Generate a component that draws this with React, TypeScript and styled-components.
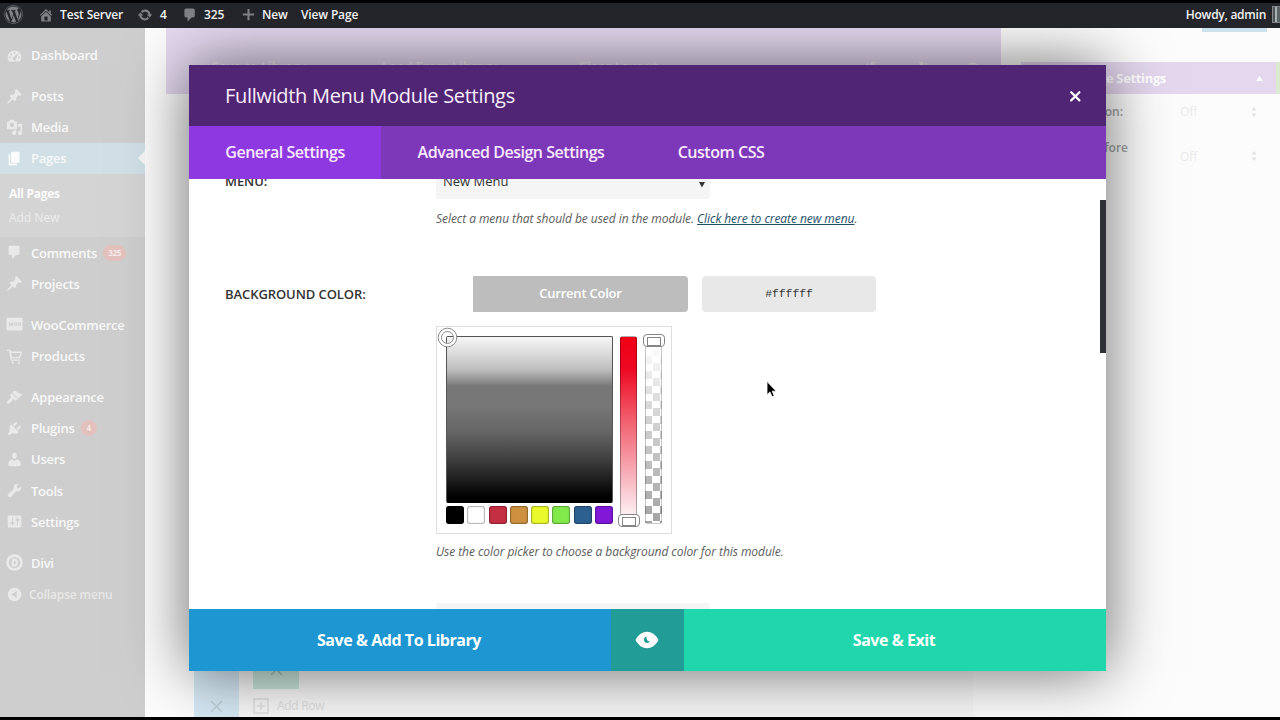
import React from 'react';
import styled, { createGlobalStyle, css } from 'styled-components';
import { FaWordpress } from 'react-icons/fa';

const Global = createGlobalStyle`
  * { box-sizing: border-box; }
  body { margin: 0; background: #000; overflow: hidden; font-family: 'Open Sans', 'Liberation Sans', sans-serif; }
`;

/* ---------- frame ---------- */
const Screen = styled.div`
  position: relative;
  width: 1280px;
  height: 720px;
  padding: 3px 0;
  background: #000;
  overflow: hidden;
  display: flex;
  flex-direction: column;
`;

const AdminBar = styled.header`
  flex: none;
  height: 25px;
  background: #23252b;
  display: flex;
  align-items: flex-start;
  color: #f2f2f2;
  font-size: 12px;
  font-weight: 600;
  letter-spacing: -0.15px;
  padding-left: 4px;
  overflow: hidden;
`;

const BarItem = styled.div<{ $w: number; $gap?: number }>`
  flex: none;
  width: ${(p) => p.$w}px;
  height: 23px;
  display: flex;
  align-items: center;
  gap: ${(p) => p.$gap ?? 6}px;
  white-space: nowrap;
  svg { flex: none; color: #7e8084; }
`;

const Howdy = styled.div`
  margin-left: auto;
  height: 23px;
  display: flex;
  align-items: center;
  gap: 6px;
  white-space: nowrap;
  letter-spacing: -0.25px;
`;

const Avatar = styled.div`
  width: 8px;
  height: 17px;
  border: 1px solid #85878a;
  border-right: 0;
  background: linear-gradient(90deg, #4d5458 0 2px, #a9b0b2 2px 4px, #5b6366 4px);
`;

const Body = styled.div`
  flex: 1;
  min-height: 0;
  display: flex;
  background: #fcfcfc;
  overflow: hidden;
`;

/* ---------- sidebar ---------- */
const Sidebar = styled.nav`
  flex: none;
  width: 145px;
  background: #cecece;
  padding-top: 11.5px;
  color: #f8f8f8;
  font-size: 13px;
  font-weight: 600;
  letter-spacing: -0.25px;
`;

const NavRow = styled.div<{ $active?: boolean; $dim?: boolean; $spaced?: boolean }>`
  position: relative;
  height: 31.15px;
  margin-top: ${(p) => (p.$spaced ? 10 : 0)}px;
  padding-left: 6px;
  display: flex;
  align-items: center;
  white-space: nowrap;
  svg { flex: none; width: 17px; height: 17px; margin-right: 8px; color: #e9e9e9; }
  ${(p) => p.$dim && css`color: #e8e8e8; font-size: 12px; letter-spacing: -0.15px; span { margin-left: -2px; }`}
  ${(p) => p.$active && css`
    background: #d0e0e6;
    svg { color: #fbfbfb; }
    &::after {
      content: '';
      position: absolute;
      right: 0;
      top: 8px;
      border: 7.5px solid transparent;
      border-left: 0;
      border-right: 7px solid #f8f8f8;
    }
  `}
`;

const SubMenu = styled.div`
  height: 63px;
  background: #d4d4d4;
  padding: 7.5px 0 0 9px;
  font-size: 12px;
  line-height: 24.6px;
`;
const SubItem = styled.div<{ $current?: boolean }>`
  font-weight: ${(p) => (p.$current ? 700 : 400)};
  letter-spacing: ${(p) => (p.$current ? -0.3 : 0)}px;
  color: ${(p) => (p.$current ? '#fcfcfc' : '#ededed')};
`;

const Bubble = styled.b`
  margin-left: 6px;
  min-width: 16px;
  height: 16px;
  padding: 0 5px;
  border-radius: 8px;
  background: #e3c2bd;
  color: #f6e9e7;
  font-size: 8px;
  font-weight: 700;
  line-height: 16px;
  text-align: center;
  &[data-round] { padding: 0; }
`;

/* ---------- page behind the dialog ---------- */
const Builder = styled.main`
  flex: none;
  width: 835px;
  margin-left: 21px;
  display: flex;
  flex-direction: column;
  justify-content: space-between;
`;

const BuilderBar = styled.div`
  height: 66px;
  background: #e5d9f0;
  padding: 28px 20px 0 46px;
  display: flex;
  font-size: 13px;
  line-height: 20px;
  font-weight: 600;
  color: #f6f2fa;
  white-space: nowrap;
`;
const BuilderLink = styled.span<{ $w: number }>`
  flex: none;
  width: ${(p) => p.$w}px;
`;

const SectionBox = styled.div`
  width: 779px;
  height: 60px;
  margin-left: 28px;
  background: #f8f8f8;
  display: flex;
  align-items: flex-end;
`;
const SectionHandle = styled.div`
  width: 45px;
  height: 100%;
  background: #d5e8f4;
  display: flex;
  align-items: flex-end;
  justify-content: center;
  padding-bottom: 4px;
  color: #bfcfd8;
`;
const SectionInner = styled.div`
  margin-left: 14px;
  display: flex;
  flex-direction: column;
  height: 60px;
`;
const GreenTab = styled.div`
  width: 46px;
  height: 32px;
  background: #cbe8de;
  display: flex;
  justify-content: center;
  align-items: center;
  color: #a9bdb6;
  svg { margin-top: -8px; }
`;
const AddRow = styled.div`
  height: 28px;
  padding-top: 5px;
  display: flex;
  align-items: center;
  gap: 8px;
  font-size: 12px;
  letter-spacing: -0.3px;
  color: #dedede;
  svg { flex: none; }
`;

const Aside = styled.aside`
  flex: 1;
  margin-left: 20px;
  display: flex;
  flex-direction: column;
  overflow: hidden;
`;
const PublishEdge = styled.div`
  width: 65px;
  height: 4px;
  margin: 0 0 30px 181px;
  background: #cbe2ec;
`;
const AsideHead = styled.div`
  height: 32px;
  background: #e4d7ee;
  border-right: 4px solid #dcebcf;
  display: flex;
  align-items: center;
  justify-content: space-between;
  padding: 0 13px 0 30px;
  color: #fff;
  font-size: 13px;
  font-weight: 700;
  white-space: nowrap;
`;
const HeadTitle = styled.span`
  width: 115px;
  display: flex;
  justify-content: flex-end;
  letter-spacing: -0.35px;
`;
const AsideRow = styled.div<{ $h: number }>`
  height: ${(p) => p.$h}px;
  display: flex;
  align-items: center;
  padding-right: 23px;
  font-size: 12px;
  color: #ebebeb;
`;
const AsideLabel = styled.span<{ $w: number; $lift?: number }>`
  width: ${(p) => p.$w}px;
  margin-bottom: ${(p) => p.$lift ?? 0}px;
  text-align: right;
  white-space: nowrap;
  font-weight: 600;
  color: #a2a2a2;
`;
const AsideValue = styled.span<{ $ml: number }>`
  margin-left: ${(p) => p.$ml}px;
  flex: 1;
  display: flex;
  justify-content: space-between;
  align-items: center;
`;

/* ---------- dialog ---------- */
const Dialog = styled.section`
  position: absolute;
  left: 189px;
  top: 37px;
  width: 917px;
  height: 606px;
  display: flex;
  flex-direction: column;
  background: #fff;
  box-shadow: 0 0 58px rgba(0, 0, 0, 0.58);
`;
const Clip = styled.div`
  position: absolute;
  inset: 28px 0 3px;
  overflow: hidden;
`;
const DialogHead = styled.div`
  flex: none;
  height: 60.5px;
  background: #4f2574;
  padding: 2px 24px 0 36px;
  display: flex;
  align-items: center;
  justify-content: space-between;
  color: #fbeffd;
  svg { color: #fff; }
`;
const Title = styled.h1`
  margin: 0;
  font-size: 20px;
  line-height: 28px;
  font-weight: 400;
  letter-spacing: -0.31px;
`;
const Tabs = styled.div`
  flex: none;
  height: 53.5px;
  background: #7c38b9;
  display: flex;
`;
const Tab = styled.div<{ $on?: boolean; $w: number }>`
  width: ${(p) => p.$w}px;
  text-align: center;
  font-size: 16px;
  font-weight: 600;
  line-height: 52px;
  letter-spacing: -0.47px;
  color: #fbe9ff;
  white-space: nowrap;
  background: ${(p) => (p.$on ? '#8e38e2' : 'transparent')};
`;
const Panel = styled.div`
  position: relative;
  flex: 1;
  min-height: 0;
  overflow: hidden;
`;
const Thumb = styled.div`
  position: absolute;
  right: 0;
  top: 21px;
  width: 6.5px;
  height: 152.5px;
  background: #303038;
`;
const Form = styled.div`
  margin-top: -16px;
  padding-left: 36px;
`;
const Field = styled.div<{ $h: number }>`
  height: ${(p) => p.$h}px;
  display: grid;
  grid-template-columns: 211px 1fr;
  align-items: start;
`;
const Label = styled.div`
  font-size: 13px;
  font-weight: 600;
  line-height: 36px;
  letter-spacing: -0.08px;
  color: #333;
`;
const Select = styled.div`
  width: 274px;
  height: 36px;
  background: #f5f5f6;
  border-radius: 3px;
  padding: 0 4px 0 7px;
  display: flex;
  align-items: center;
  justify-content: space-between;
  font-size: 13px;
  color: #333;
  svg { margin-top: 8px; }
`;
const Help = styled.p<{ $top: number }>`
  margin: ${(p) => p.$top}px 0 0;
  font-size: 12px;
  line-height: 18px;
  font-style: italic;
  letter-spacing: -0.055px;
  color: #5c5c5c;
  white-space: nowrap;
  a { color: #1f5068; text-decoration: underline; }
`;
const ColorRow = styled.div`
  display: flex;
  gap: 14px;
  padding-left: 37px;
`;
const Current = styled.div`
  width: 215px;
  height: 36px;
  border-radius: 0 4px 4px 0;
  background: #bdbdbd;
  color: #fff;
  font-size: 13px;
  font-weight: 600;
  line-height: 35px;
  letter-spacing: -0.22px;
  text-align: center;
`;
const HexInput = styled.div`
  width: 174px;
  height: 36px;
  border-radius: 4px;
  background: #e8e8e8;
  color: #333;
  font-family: 'Liberation Mono', monospace;
  font-size: 11.3px;
  line-height: 37px;
  text-align: center;
`;
const Picker = styled.div`
  position: relative;
  width: 236px;
  height: 208px;
  margin-top: 14px;
  padding: 9px;
  border: 1px solid #dfdfdf;
  background: #fff;
  display: flex;
  gap: 7px;
`;
const PickerMain = styled.div`
  display: flex;
  flex-direction: column;
  justify-content: space-between;
  height: 188px;
  width: 167px;
`;
const Square = styled.div`
  height: 167px;
  border-radius: 2px;
  border: 1px solid #555;
  border-bottom-color: #000;
  background: linear-gradient(#f6f6f6 0, #dcdcdc 10%, #bcbcbc 20%, #9a9a9a 25%, #777 30%, #777 42%, #666 57%, #444 72%, #1c1c1c 87%, #000 97%);
`;
const Swatches = styled.div`
  display: flex;
  justify-content: space-between;
`;
const Swatch = styled.i<{ $c: string }>`
  width: 18px;
  height: 18px;
  border-radius: 3px;
  background: ${(p) => p.$c};
  box-shadow: inset 0 0 0 1px rgba(0, 0, 0, 0.2), inset 0 0 3px rgba(0, 0, 0, 0.25);
`;
const Strip = styled.div`
  position: relative;
  width: 17px;
  height: 188px;
  border-radius: 3px;
  overflow: hidden;
  border: 1px solid rgba(0, 0, 0, 0.3);
`;
const HueStrip = styled(Strip)`
  background: linear-gradient(#f00014 0, #ee0822 17%, #f2606f 45%, #f6a5af 70%, #fdeef1 95%);
`;
const AlphaStrip = styled(Strip)`
  margin-left: 1px;
  border-color: rgba(0, 0, 0, 0.22);
  background:
    linear-gradient(rgba(255, 255, 255, 1) 3%, rgba(255, 255, 255, 0.6) 35%, rgba(255, 255, 255, 0) 100%),
    repeating-conic-gradient(#fff 0 25%, #a4a4a4 0 50%) -1px 4px / 15px 15px;
`;
const Handle = styled.div<{ $x: number; $y: number }>`
  position: absolute;
  left: ${(p) => p.$x}px;
  top: ${(p) => p.$y}px;
  width: 22px;
  height: 13px;
  border: 1px solid #858585;
  border-radius: 4px;
  background: #fff;
  padding: 2px 3px;
  &::after {
    content: '';
    display: block;
    height: 7px;
    border: 1px solid #858585;
  }
`;
const Ring = styled.svg`
  position: absolute;
  left: 0;
  top: 0;
`;
const Footer = styled.div`
  flex: none;
  height: 62px;
  display: grid;
  grid-template-columns: 422px 73px 1fr;
  color: #fff;
  font-size: 16px;
  font-weight: 700;
  letter-spacing: -0.45px;
`;
const FootButton = styled.div<{ $bg: string }>`
  background: ${(p) => p.$bg};
  display: flex;
  align-items: center;
  justify-content: center;
  padding-right: 2px;
`;
const Cursor = styled.svg`
  position: absolute;
  left: 766px;
  top: 380px;
`;

/* ---------- icons ---------- */
const paths = {
  home: 'M16 8.5l1.53 1.53-1.06 1.06L10 4.6l-6.47 6.49-1.06-1.06L10 2.5l4 4v-2h2v4zm-6-2.46l6 5.99V18H4v-5.97zM12 17v-5H8v5h4z',
  pin: 'M10.44 3.02l1.82-1.82 6.36 6.35-1.83 1.82c-1.05-.68-2.48-.57-3.41.36l-.75.75c-.92.93-1.04 2.35-.35 3.41l-1.83 1.82-2.41-2.41-2.8 2.79c-.42.42-3.38 2.71-3.8 2.29s1.86-3.39 2.28-3.81l2.79-2.79L4.1 9.36l1.83-1.82c1.05.69 2.48.57 3.4-.36l.75-.75c.93-.92 1.05-2.35.36-3.41z',
  comment: 'M5 2h9c1.1 0 2 .9 2 2v7c0 1.1-.9 2-2 2h-2l-5 5v-5H5c-1.1 0-2-.9-2-2V4c0-1.1.9-2 2-2z',
  page: 'M6 15V2h10v13H6zm-1 1h8v2H3V5h2v11z',
  user: 'M10 9.25c-2.27 0-2.73-3.44-2.73-3.44C7 4.02 7.82 2 9.97 2c2.16 0 2.98 2.02 2.71 3.81 0 0-.41 3.44-2.68 3.44zm0 2.57L12.72 10c2.39 0 4.52 2.33 4.52 4.53v2.49s-3.65 1.13-7.24 1.13c-3.65 0-7.24-1.13-7.24-1.13v-2.49c0-2.25 1.94-4.48 4.47-4.48z',
  tools: 'M16.68 9.77c-1.34 1.34-3.3 1.67-4.95.99l-5.41 6.52c-.99.99-2.59.99-3.58 0s-.99-2.59 0-3.57l6.52-5.42c-.68-1.65-.35-3.61.99-4.95 1.28-1.28 3.12-1.62 4.72-1.06l-2.89 2.89 2.82 2.82 2.86-2.87c.53 1.58.18 3.39-1.08 4.65z',
  settings: 'M18 16V4c0-.55-.45-1-1-1H3c-.55 0-1 .45-1 1v12c0 .55.45 1 1 1h14c.55 0 1-.45 1-1zM8 11h1c.55 0 1 .45 1 1s-.45 1-1 1H8v1.5c0 .28-.22.5-.5.5s-.5-.22-.5-.5V13H6c-.55 0-1-.45-1-1s.45-1 1-1h1V5.5c0-.28.22-.5.5-.5s.5.22.5.5V11zm5-2h-1c-.55 0-1-.45-1-1s.45-1 1-1h1V5.5c0-.28.22-.5.5-.5s.5.22.5.5V7h1c.55 0 1 .45 1 1s-.45 1-1 1h-1v5.5c0 .28-.22.5-.5.5s-.5-.22-.5-.5V9z',
  plugins: 'M13.11 4.36L9.87 7.6 8 5.73l3.24-3.24c.35-.34 1.05-.2 1.56.32.52.51.66 1.21.31 1.55zm-8 1.77l.91-1.12 9.01 9.01-1.19.84c-.71.71-2.63 1.16-3.82 1.16H6.14L4.9 17.26c-.59.59-1.54.59-2.12 0-.59-.58-.59-1.53 0-2.12L4 13.9v-3.88c0-1.18.4-3.18 1.11-3.89zm7.26 3.97l3.24-3.24c.34-.35 1.04-.21 1.55.31.52.51.66 1.21.31 1.55l-3.24 3.25z',
  brush: 'M14.48 11.06L7.41 3.99l1.5-1.5c.5-.56 2.3-.47 3.51.32 1.21.8 1.43 1.28 2.91 2.1 1.18.64 2.45 1.26 4.45.85zm-.71.71L6.7 4.7 4.93 6.47c-.39.39-.39 1.02 0 1.41l1.06 1.06c.39.39.39 1.03 0 1.42-.6.6-1.43 1.11-2.21 1.69-.35.26-.7.53-1.01.84C1.43 14.23.4 16.08 1.4 17.07c.99 1 2.84-.03 4.18-1.36.31-.31.58-.66.85-1.02.57-.78 1.08-1.61 1.69-2.21.39-.39 1.02-.39 1.41 0l1.06 1.06c.39.39 1.02.39 1.41 0z',
  media: 'M13 11V4c0-.55-.45-1-1-1h-1.67L9 1H5L3.67 3H2c-.55 0-1 .45-1 1v7c0 .55.45 1 1 1h10c.55 0 1-.45 1-1zM7 4.5c1.38 0 2.5 1.12 2.5 2.5S8.38 9.5 7 9.5 4.5 8.38 4.5 7 5.62 4.5 7 4.5zM14 6h5v10.5c0 1.38-1.12 2.5-2.5 2.5S14 17.88 14 16.5s1.12-2.5 2.5-2.5c.17 0 .34.02.5.05V9h-3V6zm-4 8.05V13h2v3.5c0 1.38-1.12 2.5-2.5 2.5S7 17.88 7 16.5 8.12 14 9.5 14c.17 0 .34.02.5.05z',
  update: 'M10.2 3.28c3.53 0 6.43 2.61 6.92 6h2.08l-3.5 4-3.5-4h2.32c-.45-1.97-2.21-3.45-4.32-3.45-1.45 0-2.73.71-3.54 1.78L4.95 5.66C6.23 4.2 8.11 3.28 10.2 3.28zm-.4 13.44c-3.52 0-6.43-2.61-6.92-6H.8l3.5-4c1.17 1.33 2.33 2.67 3.5 4H5.48c.45 1.97 2.21 3.45 4.32 3.45 1.45 0 2.73-.71 3.54-1.78l1.71 1.95c-1.28 1.46-3.15 2.38-5.25 2.38z',
  plus: 'M17.5 8.6v2.8h-6.1v6.1H8.6v-6.1H2.5V8.6h6.1V2.5h2.8v6.1z',
  cart: 'M1 2h4l.6 2H19l-2.5 8H6.5l.4 1.500H17V15H5.600L3.500 3.500H1zM6.200 6l1 4.500h8L16.800 6zM7 16h2v2.500H7zm7 0h2v2.500h-2z',
};
type IconName = keyof typeof paths;
const Dash = ({ name, size = 17 }: { name: IconName; size?: number }) => (
  <svg width={size} height={size} viewBox="0 0 20 20" fill="currentColor" fillRule={name === 'cart' ? 'evenodd' : 'nonzero'}>
    <path d={paths[name]} />
  </svg>
);

const Gauge = () => (
  <svg viewBox="0 0 20 20">
    <path fill="currentColor" d="M3.760 17h12.480c1.100-1.370 1.760-3.110 1.760-5a8 8 0 0 0-16 0c0 1.890.66 3.630 1.760 5z" />
    <g fill="#cecece">
      <circle cx="10" cy="6.800" r="1.100" /><circle cx="6" cy="8.500" r="1.100" /><circle cx="4.600" cy="12.200" r="1.100" />
      <circle cx="15.400" cy="12.200" r="1.100" /><path d="M14.800 7.200l-3 6.500a2 2 0 1 1-2.600-1.800z" />
    </g>
  </svg>
);
const Woo = () => (
  <svg viewBox="0 0 20 20">
    <path fill="currentColor" d="M2 2h16a1.500 1.500 0 0 1 1.500 1.500v12A1.500 1.500 0 0 1 18 17H2a1.500 1.500 0 0 1-1.500-1.500v-12A1.500 1.500 0 0 1 2 2z" />
    <path d="M3.500 7.500l1 4 1.500-3 1.500 3 1-4" fill="none" stroke="#d0d0d0" strokeWidth="1.200" />
    <circle cx="11.500" cy="9.500" r="1.600" fill="none" stroke="#d0d0d0" strokeWidth="1.200" />
    <circle cx="15.700" cy="9.500" r="1.600" fill="none" stroke="#d0d0d0" strokeWidth="1.200" />
  </svg>
);
const DiviMark = () => (
  <svg viewBox="0 0 20 20" fill="none" stroke="currentColor">
    <circle cx="10" cy="10" r="8.200" strokeWidth="3.200" />
    <path d="M8 6.500h1.800c2 0 3.200 1.400 3.200 3.500s-1.200 3.500-3.200 3.500H8z" strokeWidth="2.600" />
  </svg>
);
const Collapse = () => (
  <svg viewBox="0 0 20 20">
    <circle cx="10" cy="10" r="8" fill="currentColor" />
    <path d="M12.500 5.800v8.400L6.500 10z" fill="#cecece" />
  </svg>
);
const Sorter = () => (
  <svg width="6" height="10" viewBox="0 0 6 10" fill="#e2e2e2"><path d="M3 0l2.500 3.500h-5zM3 10L.5 6.500h5z" /></svg>
);

const swatches = ['#000000', '#ffffff', '#c52f42', '#cd9140', '#eaf92b', '#83ea4c', '#2c608f', '#8118d8'];

export default function App() {
  return (
    <Screen>
      <Global />
      <AdminBar>
        <BarItem $w={34}><FaWordpress size={19} /></BarItem>
        <BarItem $w={99} $gap={6}><Dash name="home" size={16} />Test Server</BarItem>
        <BarItem $w={45} $gap={7}><Dash name="update" size={16} />4</BarItem>
        <BarItem $w={59} $gap={6}><Dash name="comment" size={16} />325</BarItem>
        <BarItem $w={60} $gap={6}><Dash name="plus" size={15} />New</BarItem>
        <BarItem $w={80}>View Page</BarItem>
        <Howdy>Howdy, admin<Avatar /></Howdy>
      </AdminBar>

      <Body>
        <Sidebar>
          <NavRow><Gauge /><span>Dashboard</span></NavRow>
          <NavRow $spaced><Dash name="pin" /><span>Posts</span></NavRow>
          <NavRow><Dash name="media" /><span>Media</span></NavRow>
          <NavRow $active><Dash name="page" /><span>Pages</span></NavRow>
          <SubMenu>
            <SubItem $current>All Pages</SubItem>
            <SubItem>Add New</SubItem>
          </SubMenu>
          <NavRow><Dash name="comment" /><span>Comments</span><Bubble>325</Bubble></NavRow>
          <NavRow><Dash name="pin" /><span>Projects</span></NavRow>
          <NavRow $spaced><Woo /><span>WooCommerce</span></NavRow>
          <NavRow><Dash name="cart" /><span>Products</span></NavRow>
          <NavRow $spaced><Dash name="brush" /><span>Appearance</span></NavRow>
          <NavRow><Dash name="plugins" /><span>Plugins</span><Bubble data-round>4</Bubble></NavRow>
          <NavRow><Dash name="user" /><span>Users</span></NavRow>
          <NavRow><Dash name="tools" /><span>Tools</span></NavRow>
          <NavRow><Dash name="settings" /><span>Settings</span></NavRow>
          <NavRow $spaced><DiviMark /><span>Divi</span></NavRow>
          <NavRow $dim><Collapse /><span>Collapse menu</span></NavRow>
        </Sidebar>

        <Builder>
          <BuilderBar>
            <BuilderLink $w={170}>Save to Library</BuilderLink>
            <BuilderLink $w={197}>Load From Library</BuilderLink>
            <BuilderLink $w={286}>Clear Layout</BuilderLink>
            <BuilderLink $w={53}>↺</BuilderLink>
            <BuilderLink $w={49}>↻</BuilderLink>
            <BuilderLink $w={20}>◷</BuilderLink>
          </BuilderBar>
          <SectionBox>
            <SectionHandle>
              <svg width="13" height="13" viewBox="0 0 13 13" stroke="currentColor" strokeWidth="1.500"><path d="M1 1l11 11M12 1L1 12" /></svg>
            </SectionHandle>
            <SectionInner>
              <GreenTab>
                <svg width="13" height="13" viewBox="0 0 13 13" stroke="currentColor" strokeWidth="1.500"><path d="M1 1l11 11M12 1L1 12" /></svg>
              </GreenTab>
              <AddRow>
                <svg width="16" height="16" viewBox="0 0 16 16" fill="none" stroke="currentColor" strokeWidth="1.400"><path d="M1 1h14v14H1zM8 4v8M4 8h8" /></svg>
                Add Row
              </AddRow>
            </SectionInner>
          </SectionBox>
        </Builder>

        <Aside>
          <PublishEdge />
          <AsideHead>
            <HeadTitle><span>Divi Page Settings</span></HeadTitle>
            <svg width="7" height="5" viewBox="0 0 8 6" fill="#fff"><path d="M4 0l4 6H0z" /></svg>
          </AsideHead>
          <AsideRow $h={35}>
            <AsideLabel $w={102}>Dot Navigation:</AsideLabel>
            <AsideValue $ml={57}>Off<Sorter /></AsideValue>
          </AsideRow>
          <AsideRow $h={54}>
            <AsideLabel $w={107} $lift={17}>Hide Nav Before</AsideLabel>
            <AsideValue $ml={52}>Off<Sorter /></AsideValue>
          </AsideRow>
        </Aside>
      </Body>

      <Clip>
        <Dialog>
          <DialogHead>
            <Title>Fullwidth Menu Module Settings</Title>
            <svg width="13" height="13" viewBox="0 0 13 13" fill="none" stroke="currentColor" strokeWidth="2.200" strokeLinecap="round"><path d="M2.200 2.200l8.200 8.200M10.400 2.200L2.200 10.400" /></svg>
          </DialogHead>
          <Tabs>
            <Tab $on $w={192}>General Settings</Tab>
            <Tab $w={260}>Advanced Design Settings</Tab>
            <Tab $w={160}>Custom CSS</Tab>
          </Tabs>
          <Panel>
            <Form>
              <Field $h={113}>
                <Label>MENU:</Label>
                <div>
                  <Select>
                    New Menu
                    <svg width="8" height="6" viewBox="0 0 8 6" fill="#333"><path d="M1 0h6L4 5.500z" /></svg>
                  </Select>
                  <Help $top={11}>Select a menu that should be used in the module. <a>Click here to create new menu</a>.</Help>
                </div>
              </Field>
              <Field $h={327}>
                <Label>BACKGROUND COLOR:</Label>
                <div>
                  <ColorRow>
                    <Current>Current Color</Current>
                    <HexInput>#ffffff</HexInput>
                  </ColorRow>
                  <Picker>
                    <PickerMain>
                      <Square />
                      <Swatches>{swatches.map((c) => <Swatch key={c} $c={c} />)}</Swatches>
                    </PickerMain>
                    <HueStrip />
                    <AlphaStrip />
                    <Ring width="22" height="22" viewBox="0 0 22 22" fill="none">
                      <circle cx="10.500" cy="10.500" r="7.500" stroke="#fff" strokeWidth="3" />
                      <circle cx="10.500" cy="10.500" r="9.300" stroke="#8c8c8c" />
                      <circle cx="10.500" cy="10.500" r="6" stroke="#8c8c8c" />
                    </Ring>
                    <Handle $x={181} $y={187} />
                    <Handle $x={206} $y={7} />
                  </Picker>
                  <Help $top={9}>Use the color picker to choose a background color for this module.</Help>
                </div>
              </Field>
              <Field $h={36}>
                <Label />
                <Select />
              </Field>
            </Form>
            <Thumb />
          </Panel>
          <Footer>
            <FootButton $bg="#1d96d2">Save &amp; Add To Library</FootButton>
            <FootButton $bg="#229c97">
              <svg width="24" height="18" viewBox="0 0 24 18">
                <path d="M.5 9C3.500 3.500 7.500.8 12 .8S20.500 3.500 23.500 9c-3 5.500-7 8.200-11.500 8.200S3.500 14.500.5 9z" fill="#fff" />
                <path d="M11.400 5.400c-1.600.3-2.600 1.800-2.500 3.500.2 1.800 1.500 3.100 3.200 3.100 1.400 0 2.400-.6 2.800-1.700-2.200 0-3.600-1.400-3.500-4.900z" fill="#229c97" />
              </svg>
            </FootButton>
            <FootButton $bg="#20d6ac">Save &amp; Exit</FootButton>
          </Footer>
        </Dialog>
      </Clip>

      <Cursor width="11" height="19" viewBox="0 0 11 19">
        <path d="M1 1.500v13.200l3-2.800 2 4.900 2.200-1-2-4.600h4z" fill="#000" stroke="#fff" strokeWidth=".8" />
      </Cursor>
    </Screen>
  );
}
